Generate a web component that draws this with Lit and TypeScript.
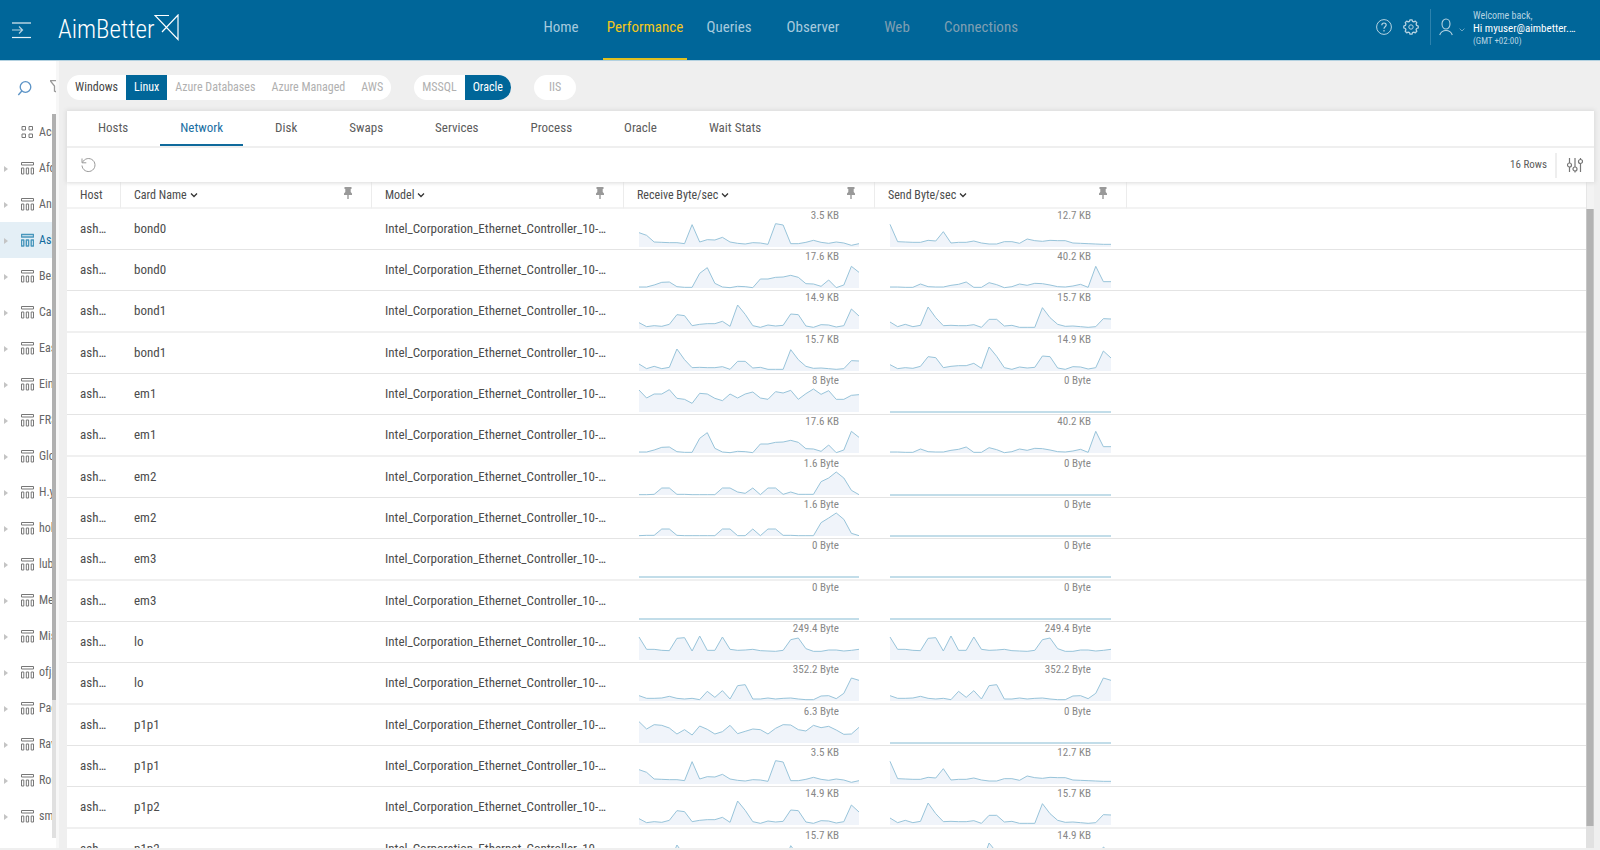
import { LitElement, html, svg, css } from "lit";
import { customElement, property, state } from "lit/decorators.js";
import { classMap } from "lit/directives/class-map.js";

/* Heights of a trace above its floor, in thirds of a pixel. */
const trace = (floor: number, levels: number[]) => levels.map((y) => floor - y);

const RX_A = trace(200, [157,165,185,186,187,187,190,133,185,178,179,171,185,189,191,187,188,192,130,134,190,190,186,180,186,189,185,188,195,190]);
const TX_A = trace(200, [132,184,185,186,186,180,182,154,188,186,186,182,188,191,191,184,184,189,176,181,183,180,181,181,188,189,190,191,192,192]);
const RX_B = trace(324, [321,321,315,307,306,320,322,322,280,263,310,321,323,319,320,323,297,297,292,291,286,292,311,312,319,300,323,315,259,277]);
const TX_B = trace(324, [321,321,322,322,312,320,321,321,316,313,306,322,322,308,314,323,320,312,316,310,311,315,320,321,318,313,322,259,305,305]);
const BOND_1 = trace(448, [429,441,438,440,434,405,408,438,434,432,432,425,440,376,404,438,443,436,439,437,403,405,439,443,435,436,442,438,388,409]);
const BOND_2 = trace(448, [427,441,434,441,437,382,414,438,437,438,438,435,443,419,419,439,437,443,443,443,384,414,434,440,439,441,443,441,417,418]);
const EM1 = trace(126, [60,84,72,72,59,85,88,100,70,72,85,92,72,84,72,66,84,88,65,69,61,88,71,57,73,62,88,88,76,74]);
const EM2_A = trace(375, [374,374,373,354,354,373,373,374,374,374,374,354,354,366,370,354,374,354,354,373,366,373,373,373,335,324,306,324,361,374]);
const EM2_B = trace(499, [498,497,497,478,478,497,498,498,498,498,498,478,478,498,498,478,498,478,478,497,497,498,498,498,459,445,430,449,491,498]);
const LO_A = trace(181, [112,149,149,152,153,116,114,154,109,152,152,112,149,152,151,149,153,154,155,152,120,115,147,155,155,151,151,154,152,149]);
const LO_B = trace(305, [289,297,297,296,291,297,299,297,301,276,294,274,299,259,256,299,299,296,299,297,296,299,301,301,290,289,298,282,236,243]);
const P1P1 = trace(429, [365,387,374,376,384,402,389,405,378,388,402,395,376,401,394,387,389,402,385,374,375,389,393,376,383,379,390,403,402,382]);
const FLAT: number[] = [];

interface Row { card: string; rx: string; rxData: number[]; tx: string; txData: number[]; }
const row = (card: string, rx: string, rxData: number[], tx: string, txData: number[]): Row => ({ card, rx, rxData, tx, txData });

const ROWS: Row[] = [
  row("bond0", "3.5 KB", RX_A, "12.7 KB", TX_A),
  row("bond0", "17.6 KB", RX_B, "40.2 KB", TX_B),
  row("bond1", "14.9 KB", BOND_1, "15.7 KB", BOND_2),
  row("bond1", "15.7 KB", BOND_2, "14.9 KB", BOND_1),
  row("em1", "8 Byte", EM1, "0 Byte", FLAT),
  row("em1", "17.6 KB", RX_B, "40.2 KB", TX_B),
  row("em2", "1.6 Byte", EM2_A, "0 Byte", FLAT),
  row("em2", "1.6 Byte", EM2_B, "0 Byte", FLAT),
  row("em3", "0 Byte", FLAT, "0 Byte", FLAT),
  row("em3", "0 Byte", FLAT, "0 Byte", FLAT),
  row("lo", "249.4 Byte", LO_A, "249.4 Byte", LO_A),
  row("lo", "352.2 Byte", LO_B, "352.2 Byte", LO_B),
  row("p1p1", "6.3 Byte", P1P1, "0 Byte", FLAT),
  row("p1p1", "3.5 KB", RX_A, "12.7 KB", TX_A),
  row("p1p2", "14.9 KB", BOND_1, "15.7 KB", BOND_2),
  row("p1p2", "15.7 KB", BOND_2, "14.9 KB", BOND_1),
];

const FONT = css`"Roboto Condensed", Roboto, "Liberation Sans", sans-serif`;

@customElement("spark-line")
export class SparkLine extends LitElement {
  static styles = css`
    :host { display: block; }
    .chart { display: block; width: 100%; height: 26px; overflow: visible; }
    .area { fill: #f0f4fa; }
    .line { fill: none; stroke: #98c4da; stroke-width: 1; vector-effect: non-scaling-stroke; stroke-linejoin: round; }
    .flat { stroke: #c2dde9; stroke-width: 2; vector-effect: non-scaling-stroke; }
  `;
  @property({ attribute: false }) values: number[] = [];

  render() {
    const v = this.values;
    const floor = 75;
    const step = 660 / Math.max(1, v.length - 1);
    const pts = v.map((h, i) => `${(i * step).toFixed(1)},${floor - h}`).join(" ");
    return html`<svg class="chart" viewBox="0 0 660 78" preserveAspectRatio="none" aria-hidden="true">
      ${v.length
        ? svg`<polygon class="area" points="0,${floor} ${pts} 660,${floor}"></polygon><polyline class="line" points=${pts}></polyline>`
        : svg`<line class="flat" x1="0" y1="75" x2="660" y2="75"></line>`}
    </svg>`;
  }
}

@customElement("app-header")
export class AppHeader extends LitElement {
  static styles = css`
    :host { display: block; font-family: ${FONT}; }
    * { box-sizing: border-box; }
    .bar { display: grid; grid-template-columns: minmax(200px, 519px) auto 1fr; height: 61px; background: #006699; border-bottom: 1px solid #b3d1e0; }
    .brand { display: flex; align-items: center; padding: 0 0 4px 11px; }
    .icon-btn { border: 0; padding: 0; background: none; display: flex; color: #b5d3e2; cursor: pointer; }
    .brand .icon-btn { margin-top: 4px; }
    .logo { display: flex; align-items: center; margin-left: 27px; color: #fff; text-decoration: none; font-weight: 300; font-size: 25px; line-height: 30px; }
    .mark { margin-bottom: 1px; }
    .word { padding-top: 4px; }
    .nav { display: flex; }
    .link { width: 84px; height: 60px; display: flex; align-items: center; justify-content: center; padding-bottom: 7px; border-top: 2px solid transparent; border-bottom: 2px solid transparent; font-size: 15px; line-height: 20px; color: #a6cade; text-decoration: none; }
    .on { color: #f4c61c; border-bottom-color: #e0c020; }
    .off { color: #7f9fb2; }
    .tools { display: flex; justify-content: flex-end; align-items: center; padding: 0 19px 6px 0; }
    .tools .icon-btn + .icon-btn { margin-left: 11px; }
    .sep { width: 1px; height: 36px; background: #2d82ad; margin: 0 8px 0 11px; }
    .user { border: 0; background: none; padding: 0; display: flex; align-items: center; text-align: left; color: #b5d3e2; font-family: inherit; cursor: pointer; }
    .caret { margin: 6px 8px 0 6px; }
    .who { display: flex; flex-direction: column; width: 108px; padding-top: 2px; font-size: 10px; line-height: 12px; white-space: nowrap; }
    .name { color: #fff; font-size: 11px; line-height: 13px; }
    .zone { font-size: 9px; }
  `;

  render() {
    const links: [string, string][] = [["Home", ""], ["Performance", "on"], ["Queries", ""], ["Observer", ""], ["Web", "off"], ["Connections", "off"]];
    return html`<header class="bar">
      <div class="brand">
        <button class="icon-btn" aria-label="Expand menu">
          <svg width="20" height="18" viewBox="0 0 20 18" fill="none" stroke="currentColor">
            <path stroke-width="2" opacity=".75" d="M1 2h19" /><path d="M1 16.500h19" stroke="#e8f2f7" stroke-width="1.200" /><path stroke-width="1.200" d="M1 9h10M8 5.500 11.500 9 8 12.500" />
          </svg>
        </button>
        <a class="logo" href="#"><span class="word">AimBetter</span>
          <svg class="mark" width="25" height="27" viewBox="0 0 25 27" fill="none" stroke="#fff" stroke-width="1.200"><path d="M15 1.500H1L24 25.500V1L8 18" /></svg>
        </a>
      </div>
      <nav class="nav">${links.map(([t, c]) => html`<a class="link ${c}" href="#">${t}</a>`)}</nav>
      <div class="tools">
        <button class="icon-btn" aria-label="Help">
          <svg width="16" height="16" viewBox="0 0 16 16" fill="none" stroke="currentColor"><circle cx="8" cy="8" r="7.400" /><path stroke-width="1.200" d="M5.800 6.300C5.800 3.300 10.200 3.300 10.200 6.100 10.200 7.800 8 7.800 8 9.800M8 11v1.400" /></svg>
        </button>
        <button class="icon-btn" aria-label="Settings">
          <svg width="16" height="16" viewBox="0 0 16 16" fill="none" stroke="currentColor"><circle cx="8" cy="8" r="2.200" /><path stroke-width="1.300" stroke-linejoin="round" d="M6.500 2.300 7 .8h2l.5 1.500 1.300.5 1.500-.7 1.500 1.500-.7 1.500.5 1.300 1.600.6v2l-1.600.5-.5 1.300.7 1.500-1.500 1.500-1.500-.7-1.300.5L9 15.200H7l-.5-1.600-1.300-.5-1.500.7-1.500-1.500.7-1.500-.5-1.300L.8 9V7l1.600-.6.5-1.300-.7-1.500 1.500-1.500 1.500.7z" /></svg>
        </button>
        <span class="sep"></span>
        <button class="user">
          <svg width="14" height="18" viewBox="0 0 14 18" fill="none" stroke="currentColor" stroke-width="1.100"><ellipse cx="7" cy="6" rx="4" ry="5" /><path d="M.7 17C2 13.500 4.200 12.500 7 12.500s5 1 6.300 4.500" /></svg>
          <svg class="caret" width="6" height="4" viewBox="0 0 6 4" fill="none" stroke="currentColor" opacity=".6"><path d="M.6.6 3 3 5.400.6" /></svg>
          <span class="who"><span>Welcome back,</span><span class="name">Hi myuser@aimbetter.…</span><span class="zone">(GMT +02:00)</span></span>
        </button>
      </div>
    </header>`;
  }
}

@customElement("account-list")
export class AccountList extends LitElement {
  static styles = css`
    :host { display: block; font-family: ${FONT}; }
    * { box-sizing: border-box; }
    .side { height: 100%; width: 59px; background: #fff; border-right: 3px solid #f7f7f7; display: flex; flex-direction: column; overflow: hidden; }
    .top { flex: none; display: flex; height: 53px; padding: 19px 0 0 17px; gap: 17px; }
    .icon-btn { border: 0; padding: 0; background: none; display: block; height: 16px; cursor: pointer; }
    .scroll { display: flex; flex: 1; min-height: 0; margin-bottom: 10px; }
    .list { flex: 1; min-width: 0; overflow: hidden; margin: 0; padding: 0; list-style: none; }
    .item { display: flex; align-items: center; height: 36px; width: 100%; text-decoration: none; color: #666; font-size: 12px; line-height: 16px; white-space: nowrap; }
    .arrow { flex: none; width: 4px; height: 6px; background: #c4c4c4; clip-path: polygon(0 0, 100% 50%, 0 100%); margin: 2px 13px 0 4px; }
    .none { visibility: hidden; }
    .glyph { flex: none; width: 13px; height: 14px; color: #777; margin-right: 5px; }
    .on { background: #e4eff6; color: #0f6a9c; }
    .on .glyph { color: #4796bc; stroke-width: 1.4; stroke-linejoin: round; }
    .track { width: 4px; background: #e0e0e0; }
    .thumb { height: 81%; background: #b0b0b0; }
  `;

  render() {
    const names = ["Acc", "Afc", "Ana", "Ash", "Bea", "Cas", "Eas", "Ein", "FRS", "Glo", "H.ya", "hol", "lub", "Mea", "Mis", "ofja", "Pac", "Rav", "Ron", "sma"];
    return html`<aside class="side">
      <div class="top">
        <button class="icon-btn" aria-label="Search"><svg width="16" height="16" viewBox="0 0 16 16" fill="none" stroke="#5b93c6" stroke-width="1.300"><circle cx="8.500" cy="7" r="5.300" /><path d="M4.800 11 1.300 15" /></svg></button>
        <button class="icon-btn" aria-label="Filter"><svg width="16" height="16" viewBox="0 0 16 16" fill="none" stroke="#999" stroke-width="1.300"><path d="M-.5 .500h14L8.500 6v7l-4-2V6L0 .500" /></svg></button>
      </div>
      <div class="scroll">
        <ul class="list">${names.map((n, i) => html`<li><a class=${classMap({ item: true, on: i === 3 })} href="#">
          <span class=${classMap({ arrow: true, none: i === 0 })}></span>
          <svg class="glyph" viewBox="0 0 13 14" fill="none" stroke="currentColor">${i === 0
            ? svg`<path d="M1 1.500h3.500V5H1zM8 1.500h3.500V5H8zM1 9h3.500v3.500H1zM8 9h3.500v3.500H8z"/>`
            : svg`<path d="M.5 1.500h12v2.500H.5zM.5 7h2.300v6H.5zM5.300 7h2.300v6H5.300zM10.200 7h2.300v6h-2.300z"/>`}</svg>
          <span>${n}</span></a></li>`)}</ul>
        <div class="track"><div class="thumb"></div></div>
      </div>
    </aside>`;
  }
}

@customElement("network-table")
export class NetworkTable extends LitElement {
  static styles = css`
    :host { display: block; min-height: 0; overflow: hidden; font-family: ${FONT}; }
    * { box-sizing: border-box; }
    .wrap { display: flex; height: 100%; }
    .view { flex: 1; min-width: 0; overflow: hidden; background: #fff; }
    .grid { width: 100%; table-layout: fixed; border-collapse: separate; border-spacing: 0; color: #4c4c4c; font-size: 13px; line-height: 16px; }
    .host { width: 54px; }
    .metric { width: 251px; }
    .wide { width: 252px; }
    th { height: 27px; padding: 0 13px; border-right: 1px solid #ececec; border-bottom: 2px solid #f3f3f3; font-size: 12px; font-weight: 400; text-align: left; }
    th:last-child { border-right: 0; }
    .head { display: flex; align-items: center; white-space: nowrap; }
    .sort { border: 0; background: none; padding: 0; font: inherit; color: inherit; display: flex; align-items: center; gap: 3px; cursor: pointer; }
    .pin { border: 0; background: none; padding: 0; margin: 0 6px 3px auto; display: flex; cursor: pointer; }
    td { height: 41px; padding: 0 13px; border-bottom: 1px solid #e4e4e4; white-space: nowrap; overflow: hidden; }
    tr:nth-child(3n) td { height: 42px; border-bottom: 2px solid #f0f0f0; }
    .host-cell { padding-right: 0; }
    .spark { padding: 0 16px 0 15px; vertical-align: top; }
    .value { display: block; height: 13px; padding-right: 20px; text-align: right; font-size: 11px; line-height: 14px; color: #888; }
    .rail { flex: none; width: 8px; display: flex; flex-direction: column; background: #e1e1e1; }
    .rail-head { flex: none; height: 27px; background: #f3f3f3; border-left: 1px solid #e6e6e6; }
    .rail-body { flex: 1; min-height: 0; padding-bottom: 22px; }
    .rail-thumb { height: 100%; background: #b2b2b2; border: solid #c6c6c6; border-width: 0 1px; }
  `;

  private head(label: string) {
    return html`<div class="head"><button class="sort">${label}
        <svg width="8" height="6" viewBox="0 0 8 6" fill="none" stroke="#333" stroke-width="1.300"><path d="M1 1.500 4 4.500 7 1.500" /></svg></button>
      <button class="pin" aria-label="Pin ${label}"><svg width="8" height="12" viewBox="0 0 8 12" fill="#999"><path d="M.5 0h7v2H6.700v3L8 6.500V8H4.700v4H3.300V8H0V6.500L1.300 5V2H.5z" /></svg></button></div>`;
  }

  render() {
    return html`<div class="wrap">
      <div class="view"><table class="grid">
        <colgroup><col class="host" /><col class="metric" /><col class="wide" /><col class="metric" /><col class="wide" /><col /></colgroup>
        <thead><tr><th>Host</th><th>${this.head("Card Name")}</th><th>${this.head("Model")}</th><th>${this.head("Receive Byte/sec")}</th><th>${this.head("Send Byte/sec")}</th><th></th></tr></thead>
        <tbody>${ROWS.map((r) => html`<tr>
          <td class="host-cell">ash…</td><td>${r.card}</td><td>Intel_Corporation_Ethernet_Controller_10-…</td>
          <td class="spark"><span class="value">${r.rx}</span><spark-line .values=${r.rxData}></spark-line></td>
          <td class="spark"><span class="value">${r.tx}</span><spark-line .values=${r.txData}></spark-line></td><td></td>
        </tr>`)}</tbody>
      </table></div>
      <div class="rail"><div class="rail-head"></div><div class="rail-body"><div class="rail-thumb"></div></div></div>
    </div>`;
  }
}

@customElement("app-root")
export class AppRoot extends LitElement {
  static styles = css`
    :host { display: flex; flex-direction: column; height: 100vh; overflow: hidden; background: #efefef; font-family: ${FONT}; }
    * { box-sizing: border-box; }
    .body { flex: 1; min-height: 0; display: flex; padding-bottom: 2px; }
    .main { flex: 1; min-width: 0; display: flex; flex-direction: column; padding: 14px 6px 0 8px; }
    .filters { flex: none; display: flex; gap: 23px; height: 25px; margin-bottom: 11px; }
    .pill { display: flex; border-radius: 13px; background: #fff; overflow: hidden; }
    .opt { border: 0; background: none; padding: 0 8px 1px; font: inherit; font-size: 12px; line-height: 16px; color: #444; cursor: pointer; white-space: nowrap; }
    .opt:disabled { color: #b0b0b0; }
    .opt.chosen { background: #006699; color: #fff; }
    .opt:only-child { padding: 0 15px 1px; }
    .panel { flex: 1; min-height: 0; display: flex; flex-direction: column; background: #fff; }
    .upper { flex: none; box-shadow: 0 0 4px 1px #dadada; z-index: 1; }
    .tabs { display: flex; gap: 12px; height: 37px; padding-left: 11px; border-bottom: 2px solid #efefef; }
    .tab { border: 0; border-bottom: 2px solid transparent; background: none; padding: 0 20px; font: inherit; font-size: 13px; line-height: 16px; color: #5c5c5c; cursor: pointer; }
    .tab.on { color: #1a6fa3; border-bottom-color: #0f6a9c; }
    .toolbar { display: flex; align-items: center; height: 34px; padding: 0 11px 0 14px; }
    .icon-btn { border: 0; padding: 0; background: none; display: flex; cursor: pointer; }
    .count { margin-left: auto; padding-right: 8px; font-size: 11px; line-height: 14px; color: #5c5c5c; }
    .sep { width: 2px; height: 25px; background: #eee; margin-right: 10px; }
    .table { flex: 1; }
  `;
  @state() private tab = "Network";

  private pill(options: string[], chosen: string, enabled: string[]) {
    return html`<div class="pill">${options.map((o) => html`<button class=${classMap({ opt: true, chosen: o === chosen })} ?disabled=${!enabled.includes(o)}>${o}</button>`)}</div>`;
  }

  render() {
    const tabs = ["Hosts", "Network", "Disk", "Swaps", "Services", "Process", "Oracle", "Wait Stats"];
    return html`<app-header></app-header>
      <div class="body">
        <account-list></account-list>
        <main class="main">
          <div class="filters">
            ${this.pill(["Windows", "Linux", "Azure Databases", "Azure Managed", "AWS"], "Linux", ["Windows", "Linux"])}
            ${this.pill(["MSSQL", "Oracle"], "Oracle", ["Oracle"])}
            ${this.pill(["IIS"], "", [])}
          </div>
          <section class="panel">
            <div class="upper">
              <div class="tabs" role="tablist">${tabs.map((t) => html`<button role="tab" aria-selected=${t === this.tab ? "true" : "false"} class=${classMap({ tab: true, on: t === this.tab })} @click=${() => (this.tab = t)}>${t}</button>`)}</div>
              <div class="toolbar">
                <button class="icon-btn" aria-label="Refresh"><svg width="15" height="16" viewBox="0 0 15 16" fill="none" stroke="#999"><path d="M1.500 5.500A6.500 6.500 0 1 1 1 8.500M1 1.500v4.300h4.300" /></svg></button>
                <span class="count">16 Rows</span><span class="sep"></span>
                <button class="icon-btn" aria-label="Columns"><svg width="16" height="16" viewBox="0 0 16 16" fill="none" stroke="#777" stroke-width="1.200"><path d="M2.500 1v5M2.500 10v5M8 1v9M8 14v1.500M13.500 1v2M13.500 7v8" /><circle cx="2.500" cy="8" r="2" /><circle cx="8" cy="12" r="2" /><circle cx="13.500" cy="4.500" r="2" /></svg></button>
              </div>
            </div>
            <network-table class="table"></network-table>
          </section>
        </main>
      </div>`;
  }
}
